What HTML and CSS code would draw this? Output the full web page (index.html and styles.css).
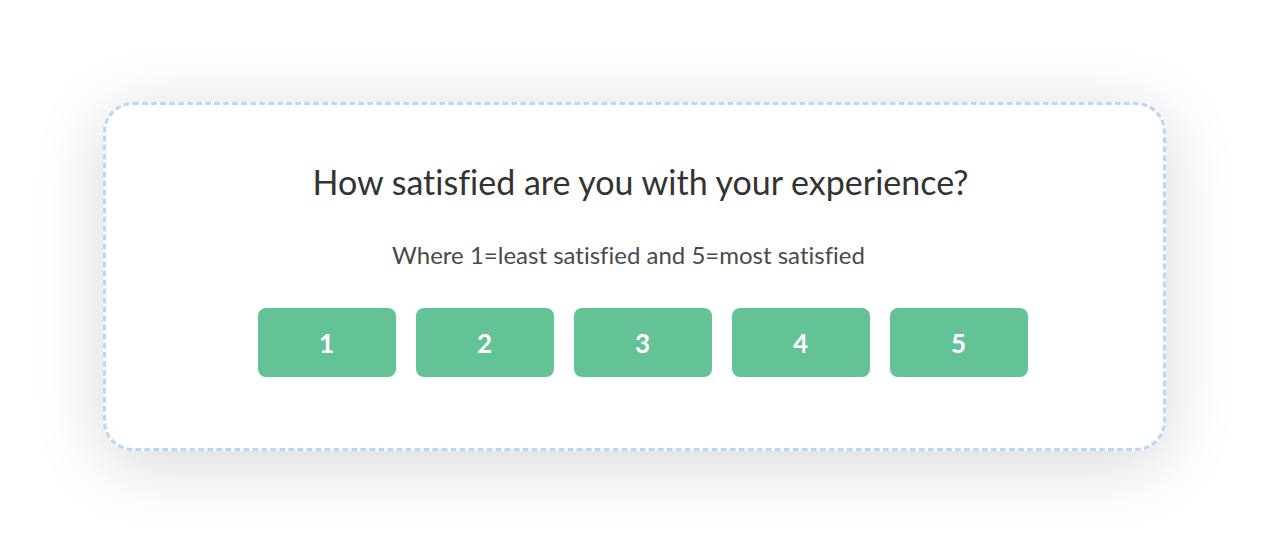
FILE: index.html
```html
<!DOCTYPE html>
<html lang="en">
<head>
  <meta charset="UTF-8">
  <title>Survey</title>
  <link rel="stylesheet" href="styles.css">
</head>
<body>
  <div class="survey-card">
    <h2>How satisfied are you with your experience?</h2>
    <p class="hint">Where 1=least satisfied and 5=most satisfied</p>
    <div class="scale">
      <button type="button">1</button>
      <button type="button">2</button>
      <button type="button">3</button>
      <button type="button">4</button>
      <button type="button">5</button>
    </div>
  </div>
</body>
</html>
```

FILE: styles.css
```css
html, body {
  height: 100%;
}

body {
  box-sizing: border-box;
  font-family: 'Lato', 'Open Sans', sans-serif;
  font-variant-ligatures: none;
  margin: 0;
  background: #ffffff;
  padding: 102px 102px 0 103px;
}

.survey-card {
  box-sizing: border-box;
  width: 1063px;
  height: 349px;
  border: 3px dashed #b8d8f7;
  border-radius: 30px;
  background: #ffffff;
  box-shadow: 0 12px 70px rgba(0, 0, 0, 0.16);
  text-align: center;
  padding-top: 55px;
}

.survey-card h2 {
  margin: 0;
  font-size: 34px;
  font-weight: 400;
  color: #333333;
  line-height: 44px;
  padding-left: 12px;
}

.hint {
  margin: 36px 0 0;
  font-size: 24px;
  color: #4a4a4a;
  line-height: 30px;
  padding-right: 12px;
}

.scale {
  display: flex;
  justify-content: center;
  gap: 20px;
  margin-top: 38px;
  padding-left: 16px;
}

.scale button {
  width: 138px;
  height: 69px;
  border: none;
  border-radius: 8px;
  background: #63c396;
  color: #ffffff;
  font-family: inherit;
  font-size: 26px;
  font-weight: 700;
  cursor: pointer;
}
```
